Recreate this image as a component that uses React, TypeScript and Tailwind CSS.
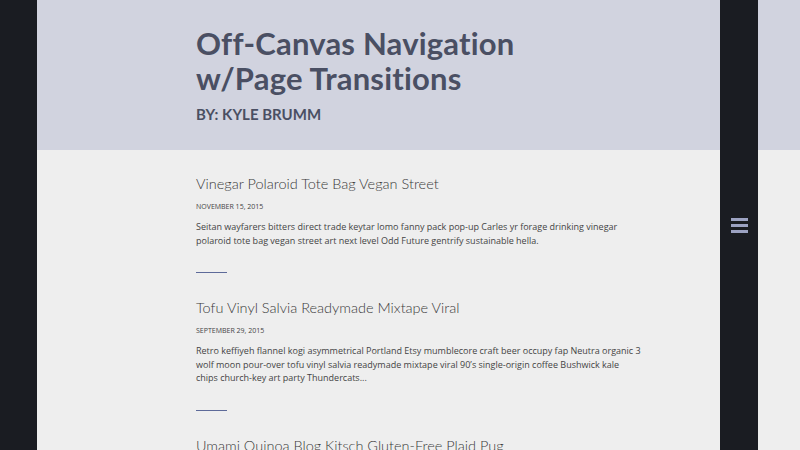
import type { FC } from 'react'

interface Post {
  title: string
  date: string
  excerpt: string
}

const posts: Post[] = [
  {
    title: 'Vinegar Polaroid Tote Bag Vegan Street',
    date: 'November 15, 2015',
    excerpt:
      'Seitan wayfarers bitters direct trade keytar lomo fanny pack pop-up Carles yr forage drinking vinegar polaroid tote bag vegan street art next level Odd Future gentrify sustainable hella.',
  },
  {
    title: 'Tofu Vinyl Salvia Readymade Mixtape Viral',
    date: 'September 29, 2015',
    excerpt:
      'Retro keffiyeh flannel kogi asymmetrical Portland Etsy mumblecore craft beer occupy fap Neutra organic 3 wolf moon pour-over tofu vinyl salvia readymade mixtape viral 90\u2019s single-origin coffee Bushwick kale chips church-key art party Thundercats...',
  },
  {
    title: 'Umami Quinoa Blog Kitsch Gluten-Free Plaid Pug',
    date: 'August 12, 2015',
    excerpt:
      'Kitsch gluten-free plaid pug umami quinoa blog, fingerstache selfies chambray before they sold out.',
  },
]

const PostItem: FC<{ post: Post }> = ({ post }) => (
  <article>
    <h2 className="text-[14.5px] leading-[20px] font-light text-[#3a3a3a] font-['Lato',sans-serif]">
      {post.title}
    </h2>
    <p className="mt-[8px] text-[7px] leading-[10px] uppercase text-[#444] font-['Open_Sans',sans-serif]">
      {post.date}
    </p>
    <p className="mt-[8px] text-[9px] leading-[13.6px] text-[#444] font-['Open_Sans',sans-serif]">
      {post.excerpt}
    </p>
    <div className="mt-[25px] mb-[25px] w-[31px] h-[1px] bg-[#5d6a99]" />
  </article>
)

export default function App() {
  return (
    <div className="relative w-[800px] h-[450px] overflow-hidden flex bg-[#1a1c22]">
      <div className="w-[37px] shrink-0 bg-[#1a1c22]" />

      <main className="flex-1 flex flex-col bg-[#eeeeee]">
        <header className="h-[150px] shrink-0 bg-[#d1d3df] pl-[159px] pt-[26px]">
          <h1 className="text-[31px] leading-[35px] font-bold text-[#4a4f63] font-['Lato',sans-serif] tracking-[0.2px]">
            Off-Canvas Navigation
            <br />
            w/Page Transitions
          </h1>
          <p className="mt-[8px] text-[15px] leading-[20px] font-bold uppercase text-[#4a4f63] font-['Lato',sans-serif]">
            By: Kyle Brumm
          </p>
        </header>

        <section className="pl-[159px] pr-[158px] pt-[24px]">
          {posts.map((post) => (
            <PostItem key={post.title} post={post} />
          ))}
        </section>
      </main>

      {/* fixed menu toggle bar */}
      <div className="absolute top-0 left-[720px] w-[38px] h-full bg-[#1a1c22] flex items-center justify-center">
        <button className="flex flex-col gap-[3px] w-[17px]" aria-label="Open menu">
          <span className="h-[3px] w-full bg-[#9ca2c2]" />
          <span className="h-[3px] w-full bg-[#9ca2c2]" />
          <span className="h-[3px] w-full bg-[#9ca2c2]" />
        </button>
      </div>
    </div>
  )
}
